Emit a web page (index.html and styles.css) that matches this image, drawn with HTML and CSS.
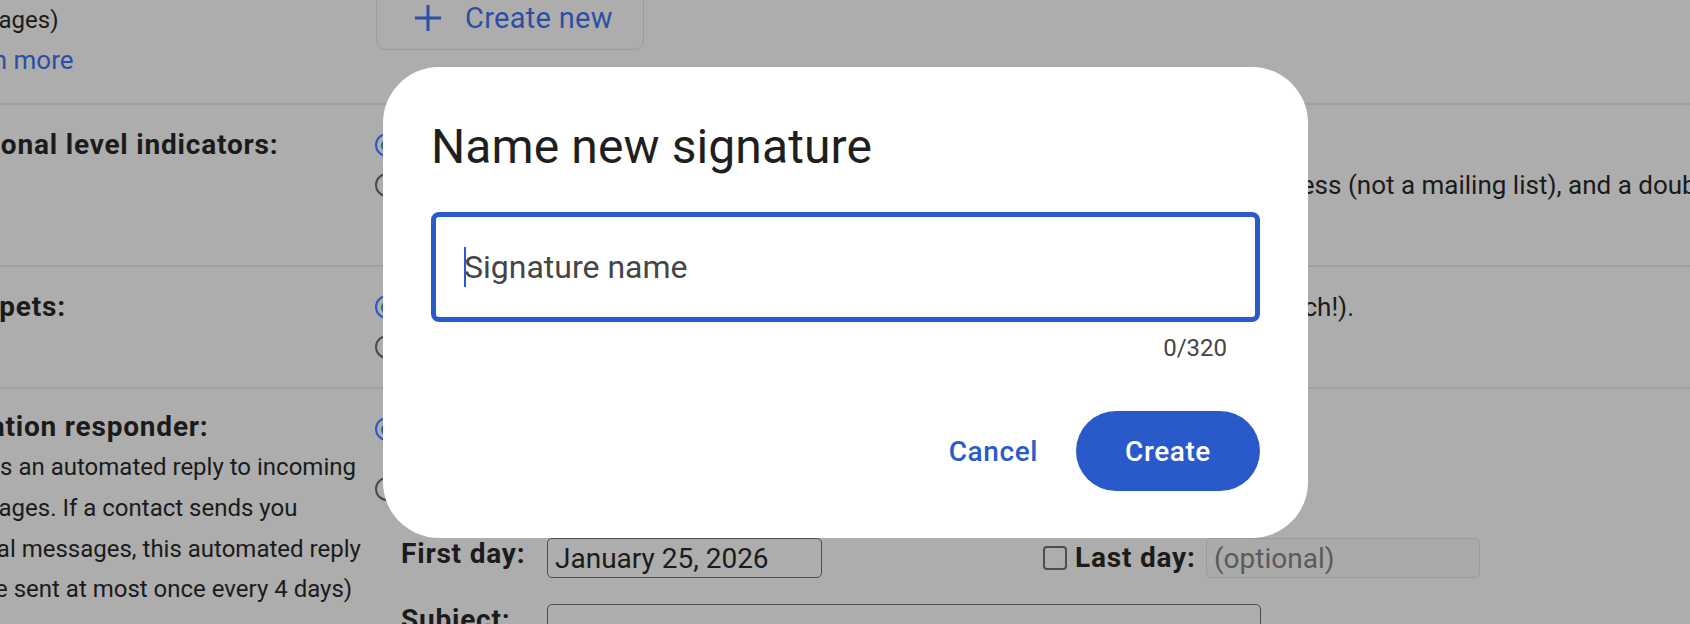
FILE: index.html
```html
<!DOCTYPE html>
<html lang="en">
<head>
<meta charset="utf-8">
<title>Settings - Name new signature</title>
<link rel="stylesheet" href="styles.css">
</head>
<body>
<main class="page">
  <section class="row row-sig">
    <div class="label">
      <div class="label-title">Signature:</div>
      <div>(appended at the end of all outgoing<br>messages)</div>
      <a class="link" href="#">Learn more</a>
    </div>
    <div class="value">
      <div class="sig-empty">No signatures</div>
      <button class="btn-outline" type="button">
        <svg class="plus" width="28" height="28" viewBox="0 0 28 28" aria-hidden="true"><path d="M14 1v26M1 14h26" stroke="currentColor" stroke-width="3" fill="none"/></svg>
        <span>Create new</span>
      </button>
    </div>
  </section>

  <section class="row">
    <div class="label"><div class="label-title">Personal level indicators:</div></div>
    <div class="value">
      <div class="opt"><span class="radio on"></span><span><b>No indicators</b></span></div>
      <div class="opt opt-multi"><span class="radio"></span><span class="opt-text shift-ind"><b>Show indicators</b> - Display an arrow ( › ) by messages sent to my address (not a mailing list), and a double<br>arrow ( » ) by messages sent only to me.</span></div>
    </div>
  </section>

  <section class="row">
    <div class="label"><div class="label-title">Snippets:</div></div>
    <div class="value">
      <div class="opt"><span class="radio on"></span><span class="opt-text shift-snip"><b>Show snippets</b> - Show snippets of the message (like Google web search!).</span></div>
      <div class="opt"><span class="radio"></span><span><b>No snippets</b> - Show subject only.</span></div>
    </div>
  </section>

  <section class="row row-vac">
    <div class="label">
      <div class="label-title">Vacation responder:</div>
      <div class="vac-desc">(sends an automated reply to incoming<br>messages. If a contact sends you<br>several messages, this automated reply<br>will be sent at most once every 4 days)</div>
    </div>
    <div class="value vac-value">
      <div class="opt"><span class="radio on"></span><span>Vacation responder off</span></div>
      <div class="opt opt-gap"><span class="radio"></span><span>Vacation responder on</span></div>
      <div class="field-row first-row">
        <span class="field-label">First day:</span>
        <input class="date-input" type="text" value="January 25, 2026">
        <span class="last-group">
          <span class="checkbox"></span>
          <span class="field-label last-label">Last day:</span>
          <input class="date-input optional" type="text" placeholder="(optional)" disabled>
        </span>
      </div>
      <div class="field-row subject-row">
        <span class="field-label">Subject:</span>
        <input class="subject-input" type="text">
      </div>
    </div>
  </section>
</main>

<div class="dialog" role="dialog" aria-labelledby="dlg-title">
  <h2 class="dialog-title" id="dlg-title">Name new signature</h2>
  <div class="field">
    <input type="text" placeholder="Signature name" aria-label="Signature name">
    <span class="caret"></span>
  </div>
  <div class="counter">0/320</div>
  <div class="actions">
    <button class="btn-text" type="button">Cancel</button>
    <button class="btn-filled" type="button">Create</button>
  </div>
</div>
</body>
</html>
```

FILE: styles.css
```css
* { box-sizing: border-box; }

html, body {
  margin: 0;
  padding: 0;
}

body {
  width: 1690px;
  height: 624px;
  overflow: hidden;
  background: #adadad;
  font-family: Roboto, "Liberation Sans", Arial, sans-serif;
  font-size: 26px;
  line-height: 40px;
  color: #1b1b1b;
}

.page {
  margin: -100px 0 0 -60px;
  width: 2300px;
}

.row {
  display: grid;
  grid-template-columns: 435px 1fr;
  padding: 20px 0;
  border-bottom: 2px solid #a0a0a0;
}

.row-sig { padding-bottom: 22px; }
.row-vac { padding-top: 18px; }

.label {
  font-size: 24px;
  white-space: nowrap;
}

.label-title {
  font-size: 28px;
  font-weight: 700;
  letter-spacing: 0.8px;
}

.link {
  display: inline-block;
  margin-left: 2px;
  font-size: 26px;
  color: #2c4fa4;
  text-decoration: none;
}

.value { white-space: nowrap; }

.sig-empty {
  height: 40px;
  margin-bottom: 26px;
}

.btn-outline {
  display: flex;
  align-items: center;
  gap: 23px;
  height: 64px;
  margin-left: 1px;
  padding: 0 30px 0 37px;
  border: 1.5px solid #9a9a9a;
  border-radius: 10px;
  background: transparent;
  color: #2c4fa4;
  font-family: Roboto, "Liberation Sans", Arial, sans-serif;
  font-size: 29px;
  font-weight: 400;
  letter-spacing: 0.3px;
  line-height: 1;
}

.plus { flex: none; }

.opt {
  display: flex;
  align-items: center;
  gap: 12px;
  height: 40px;
}

.opt-multi {
  align-items: flex-start;
  height: auto;
}

.opt-multi .radio { margin-top: 8px; }

.shift-ind { padding-left: 101px; }
.shift-snip { padding-left: 92px; }

.radio {
  flex: none;
  position: relative;
  width: 24px;
  height: 24px;
  border: 2.5px solid #4a4a4a;
  border-radius: 50%;
}

.radio.on { border-color: #2b58c6; }

.radio.on::after {
  content: "";
  position: absolute;
  inset: 3.5px;
  border-radius: 50%;
  background: #2b58c6;
}

.vac-desc { line-height: 40.75px; }

.vac-value { padding-top: 2px; }

.opt-gap { margin-top: 20px; }

.field-row {
  display: flex;
  align-items: center;
  margin-left: 26px;
}

.first-row {
  height: 40px;
  margin-top: 29px;
}

.subject-row {
  height: 44px;
  margin-top: 26px;
  align-items: flex-start;
}

.field-label {
  align-self: flex-start;
  width: 146px;
  font-size: 28px;
  font-weight: 700;
  letter-spacing: 0.8px;
  line-height: 32px;
}

.date-input,
.subject-input {
  height: 40px;
  border: 1.5px solid #4d4d4d;
  border-radius: 5px;
  padding: 0 7px;
  background: transparent;
  color: #1b1b1b;
  font-family: Roboto, "Liberation Sans", Arial, sans-serif;
  font-size: 28px;
  outline: none;
}

.date-input { width: 275px; }

.subject-input {
  width: 714px;
  height: 44px;
}

.last-group {
  display: flex;
  align-items: center;
  margin-left: 221px;
}

.checkbox {
  width: 24px;
  height: 24px;
  margin-right: 8px;
  border: 2px solid #4d4d4d;
  border-radius: 4px;
}

.last-label {
  align-self: center;
  width: 131px;
}

.date-input.optional {
  width: 274px;
  border-color: #9a9a9a;
  background: #aaaaaa;
}

.date-input.optional::placeholder { color: #5a5a5a; }

/* Dialog */
.dialog {
  position: fixed;
  left: 383px;
  top: 67px;
  width: 925px;
  padding: 52px 48px 47px;
  background: #ffffff;
  border-radius: 56px;
}

.dialog-title {
  margin: 0;
  font-family: Roboto, "Liberation Sans", Arial, sans-serif;
  font-size: 48px;
  font-weight: 400;
  line-height: 56px;
  letter-spacing: 0.1px;
  color: #1f1f1f;
}

.field {
  position: relative;
  display: flex;
  align-items: center;
  height: 110px;
  margin-top: 37px;
  padding: 0 28px;
  border: 5px solid #2a5bcd;
  border-radius: 8px;
}

.field input {
  flex: 1;
  min-width: 0;
  padding: 0;
  border: 0;
  outline: none;
  background: transparent;
  color: #1f1f1f;
  font-family: Roboto, "Liberation Sans", Arial, sans-serif;
  font-size: 32px;
  line-height: 40px;
}

.field input::placeholder { color: #454545; }

.caret {
  position: absolute;
  left: 28px;
  top: 30px;
  width: 2px;
  height: 40px;
  background: #2a5bcd;
}

.counter {
  margin-top: 12px;
  padding-right: 33px;
  text-align: right;
  font-size: 24px;
  line-height: 28px;
  color: #454545;
}

.actions {
  display: flex;
  justify-content: flex-end;
  gap: 16px;
  margin-top: 49px;
}

.btn-text,
.btn-filled {
  height: 80px;
  border: 0;
  border-radius: 40px;
  font-family: Roboto, "Liberation Sans", Arial, sans-serif;
  font-size: 28px;
  font-weight: 500;
  letter-spacing: 0.6px;
}

.btn-text {
  padding: 0 22px;
  background: transparent;
  color: #2a5bcd;
}

.btn-filled {
  width: 184px;
  background: #2a59c9;
  color: #ffffff;
}
```
